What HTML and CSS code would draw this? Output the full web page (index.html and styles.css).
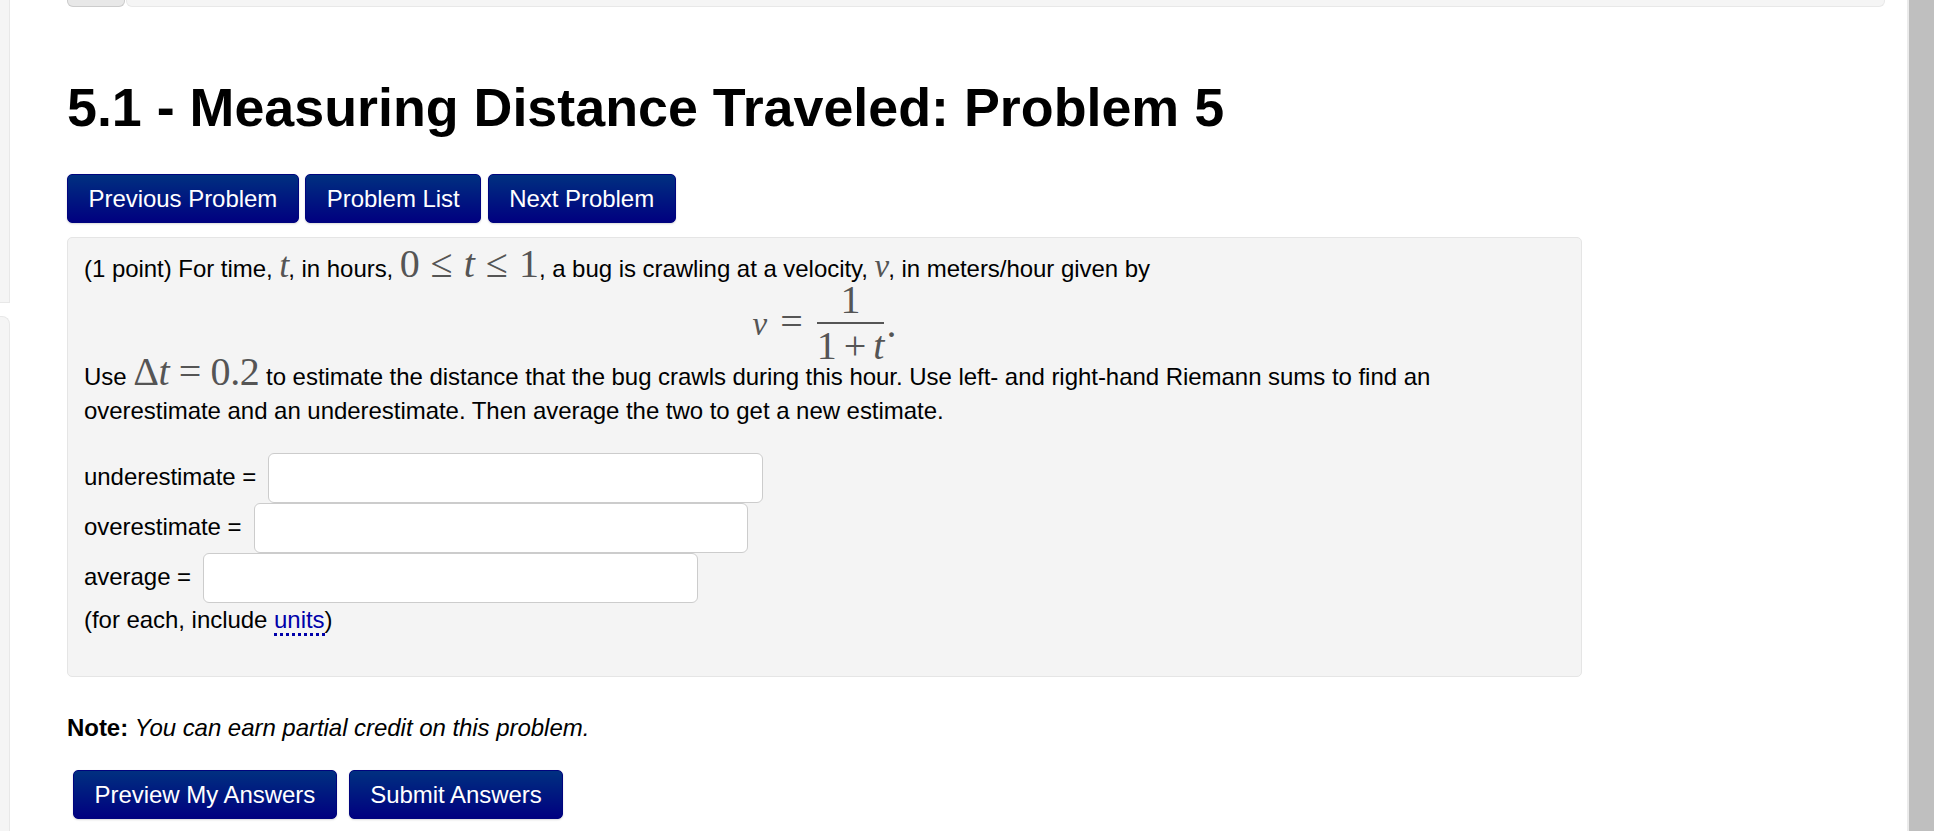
FILE: index.html
```html
<!DOCTYPE html>
<html lang="en">
<head>
<meta charset="utf-8">
<title>5.1 - Measuring Distance Traveled: Problem 5</title>
<link rel="stylesheet" href="styles.css">
</head>
<body>
<div class="page">
  <div class="rail">
    <div class="rail-top"></div>
    <div class="rail-bottom"></div>
  </div>
  <div class="main">
    <div class="strip">
      <div class="strip-tab"></div>
      <div class="strip-bar"></div>
    </div>
    <div class="content">
      <h1 class="title">5.1 - Measuring Distance Traveled: Problem 5</h1>
      <nav class="nav-row">
        <a class="btn">Previous Problem</a>
        <a class="btn">Problem List</a>
        <a class="btn">Next Problem</a>
      </nav>
      <section class="problem">
        <p class="line">(1 point) For time, <span class="math mi">t</span>, in hours, <span class="math rel">0 ≤ <i>t</i> ≤ 1</span>, a bug is crawling at a velocity, <span class="math mi mv">v</span>, in meters/hour given by</p>
        <div class="display">
          <span class="disp"><i class="mv">v</i> =</span>
          <span class="frac">
            <span class="num">1</span>
            <span class="den">1 + <i>t</i></span>
          </span>
          <span class="dot">.</span>
        </div>
        <p class="line">Use <span class="math delta">Δ<i>t</i> = 0.2</span> to estimate the distance that the bug crawls during this hour. Use left- and right-hand Riemann sums to find an overestimate and an underestimate. Then average the two to get a new estimate.</p>
        <div class="answers">
          <div class="answer"><label class="ans-label">underestimate =</label><input class="ans-input" type="text"></div>
          <div class="answer"><label class="ans-label">overestimate =</label><input class="ans-input" type="text"></div>
          <div class="answer"><label class="ans-label">average =</label><input class="ans-input" type="text"></div>
        </div>
        <p class="line">(for each, include <a class="units-link">units</a>)</p>
      </section>
      <p class="note"><b>Note:</b> <i>You can earn partial credit on this problem.</i></p>
      <div class="submit-row">
        <a class="btn">Preview My Answers</a>
        <a class="btn">Submit Answers</a>
      </div>
    </div>
  </div>
  <div class="scrollbar"></div>
</div>
</body>
</html>
```
FILE: styles.css
```css
* { box-sizing: border-box; }
html, body { margin: 0; height: 100%; overflow: hidden; background: #fff; }
body { font-family: "Liberation Sans", Arial, sans-serif; font-size: 24px; line-height: 34.5px; letter-spacing: -0.04px; color: #000; }
.page { display: flex; height: 831px; overflow: hidden; }

.rail { width: 10px; flex: none; display: flex; flex-direction: column; gap: 13px; }
.rail-top { height: 303px; background: #f5f5f5; border-right: 1px solid #e8e8e8; border-bottom: 1px solid #e8e8e8; }
.rail-bottom { flex: 1; background: #f5f5f5; border-right: 1px solid #e8e8e8; border-top: 1px solid #e8e8e8; border-top-right-radius: 8px; }

.main { flex: 1; min-width: 0; }
.strip { display: flex; gap: 1px; height: 7px; margin-left: 57px; margin-right: 22px; }
.strip-tab { width: 58px; background: #e8e8e8; border: 1px solid #ccc; border-top: 0; border-radius: 0 0 6px 6px; }
.strip-bar { flex: 1; background: #f5f5f5; border: 1px solid #e8e8e8; border-top: 0; border-radius: 0 0 6px 6px; }

.content { padding-left: 57px; }
.title { margin: 70px 0 0; font-size: 53.8px; line-height: 60px; font-weight: 700; letter-spacing: 0; }

.nav-row { display: flex; gap: 6.5px; margin-top: 37px; }
.btn { display: block; height: 49px; padding: 0 20.5px; line-height: 47px; color: #fff; white-space: nowrap; border-radius: 5px; border: 1px solid #00047e; background: linear-gradient(#003080, #000080); box-shadow: 0 1px 2px rgba(0,0,0,.15); }

.problem { width: 1515px; height: 440px; margin-top: 14px; padding: 14px 16px 0; background: #f4f4f4; border: 1px solid #e5e5e5; border-radius: 5px; }
.line { margin: 0; }
.math { font-family: "Liberation Serif", "DejaVu Serif", serif; font-size: 40px; line-height: 0; letter-spacing: 0; color: #555; }
.mi { font-size: 36px; font-style: italic; letter-spacing: -2px; margin-right: 1px; }
.mv { font-size: 33px; }
.rel { word-spacing: 1px; }
.delta { letter-spacing: -0.4px; }
.display { display: flex; justify-content: center; align-items: center; height: 73px; font-family: "Liberation Serif", "DejaVu Serif", serif; font-size: 40px; letter-spacing: 0; color: #555; }
.disp { margin-right: 14px; word-spacing: 3px; }
.dot { align-self: flex-end; margin-left: 2px; margin-bottom: 16px; line-height: 40px; }
.frac { display: flex; flex-direction: column; align-items: center; }
.num { line-height: 44px; }
.den { line-height: 44px; border-top: 2px solid #555; word-spacing: -3px; }

.answers { margin-top: 24px; }
.answer { display: flex; align-items: center; height: 50px; }
.ans-label { margin-right: 12px; }
.ans-input { width: 494.5px; height: 50px; background: #fff; border: 1px solid #ccc; border-radius: 6px; }
.units-link { color: #00a; border-bottom: 3px dotted #00a; }

.note { margin: 34px 0 0; }
.submit-row { display: flex; gap: 12px; margin: 24px 0 0 6px; }

.scrollbar { width: 27px; flex: none; background: #bfbfbf; border-left: 2px solid #ebebeb; }
```
